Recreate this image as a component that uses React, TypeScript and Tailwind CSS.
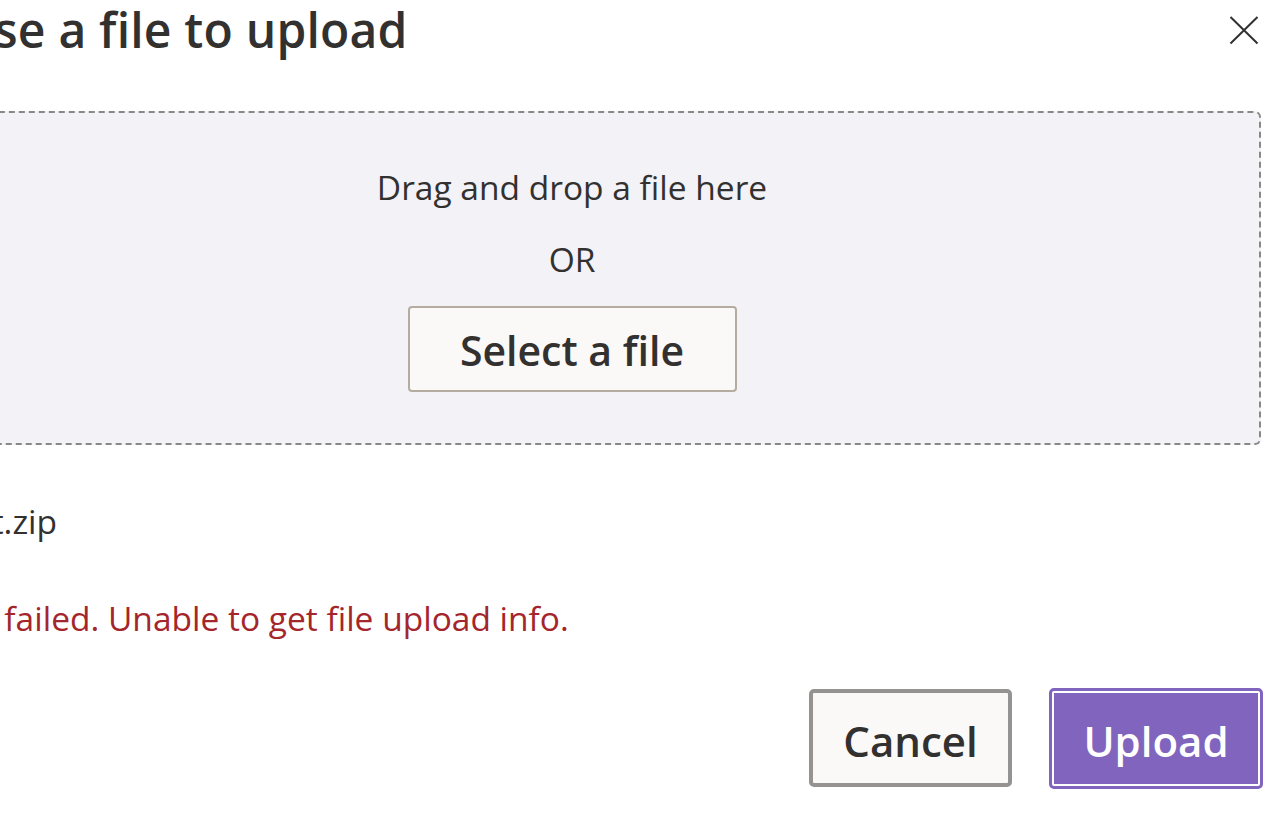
import React from "react";

export default function App() {
  return (
    <div
      className="w-[1284px] h-[814px] overflow-hidden bg-white text-[#323130]"
      style={{ fontFamily: '"Open Sans", "Noto Sans", sans-serif' }}
    >
      <div className="ml-[-117px] w-[1378px]">
        {/* Header */}
        <div className="flex h-[60px] items-center justify-between">
          <h1 className="ml-[-9px] text-[48px] font-semibold leading-[60px] tracking-[0.2px]">
            Choose a file to upload
          </h1>
          <button className="mr-[2px] flex h-[30px] w-[30px] items-center justify-center" aria-label="Close">
            <svg width="30" height="30" viewBox="0 0 30 30" fill="none">
              <path d="M1.5 2 L28.5 28.5 M28.5 2 L1.5 28.5" stroke="#323130" strokeWidth="2" />
            </svg>
          </button>
        </div>

        {/* Drop zone */}
        <div className="mt-[51px] flex h-[334px] flex-col items-center rounded-[6px] border-2 border-dashed border-[#8a8886] bg-[#f3f2f7] pt-[52px]">
          <div className="text-[33.5px] leading-[44px]">Drag and drop a file here</div>
          <div className="mt-[28px] text-[33.5px] leading-[44px]">OR</div>
          <button className="mt-[25px] flex h-[86px] w-[329px] items-center justify-center rounded-[4px] border-2 border-[#b5aca1] bg-[#faf9f8] pt-[3px] text-[41px] font-semibold">
            Select a file
          </button>
        </div>

        {/* File name */}
        <div className="ml-[-16px] mt-[54px] text-[33.5px] leading-[44px]">manifest.zip</div>

        {/* Error */}
        <div className="mt-[53px] text-[33.5px] leading-[44px] text-[#a4262c]">
          Upload failed. Unable to get file upload info.
        </div>

        {/* Footer */}
        <div className="mr-[-2px] mt-[48px] flex justify-end gap-[37px]">
          <button className="mt-[1px] flex h-[98px] w-[203px] items-center justify-center rounded-[5px] border-4 border-[#949391] bg-[#faf9f8] pt-[4px] text-[42px] font-semibold">
            Cancel
          </button>
          <button className="flex h-[101px] w-[214px] items-center justify-center rounded-[5px] border-2 border-[#8064bd] bg-[#8064bd] pt-[4px] text-[42px] font-semibold text-white outline outline-2 outline-offset-[-5px] outline-white">
            Upload
          </button>
        </div>
      </div>
    </div>
  );
}
